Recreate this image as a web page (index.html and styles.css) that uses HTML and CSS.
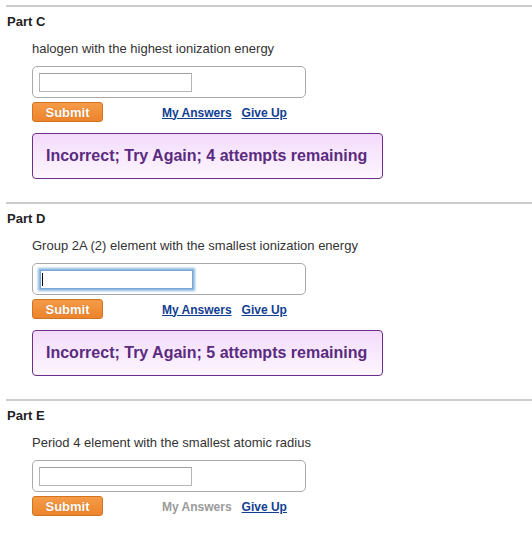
FILE: index.html
```html
<!DOCTYPE html>
<html>
<head>
<meta charset="utf-8">
<link rel="stylesheet" href="styles.css">
</head>
<body>
<div class="page">
  <section class="part">
    <h3 class="part-title">Part C</h3>
    <div class="part-body">
      <p class="question">halogen with the highest ionization energy</p>
      <div class="answer-box"><div class="answer-input"></div></div>
      <div class="actions">
        <span class="btn-submit">Submit</span>
        <span class="links"><a class="link" href="#">My Answers</a><a class="link" href="#">Give Up</a></span>
      </div>
      <div class="feedback">Incorrect; Try Again; 4 attempts remaining</div>
    </div>
  </section>
  <section class="part">
    <h3 class="part-title">Part D</h3>
    <div class="part-body">
      <p class="question">Group 2A (2) element with the smallest ionization energy</p>
      <div class="answer-box"><div class="answer-input focused"><span class="caret"></span></div></div>
      <div class="actions">
        <span class="btn-submit">Submit</span>
        <span class="links"><a class="link" href="#">My Answers</a><a class="link" href="#">Give Up</a></span>
      </div>
      <div class="feedback">Incorrect; Try Again; 5 attempts remaining</div>
    </div>
  </section>
  <section class="part">
    <h3 class="part-title">Part E</h3>
    <div class="part-body">
      <p class="question">Period 4 element with the smallest atomic radius</p>
      <div class="answer-box"><div class="answer-input"></div></div>
      <div class="actions">
        <span class="btn-submit">Submit</span>
        <span class="links"><span class="link disabled">My Answers</span><a class="link" href="#">Give Up</a></span>
      </div>
    </div>
  </section>
</div>
</body>
</html>
```
FILE: styles.css
```css
html, body {
  margin: 0;
  padding: 0;
  background: #fff;
}
body {
  font-family: "Liberation Sans", Arial, sans-serif;
  color: #222;
}
.page {
  padding: 5px 0 0 6px;
}
.part {
  border-top: 2px solid #cccccc;
  padding: 0 0 23px 1px;
}
.part-title {
  margin: 7px 0 0 0;
  font-size: 13px;
  line-height: 16px;
  font-weight: bold;
  color: #222;
}
.part-body {
  padding-left: 25px;
}
.question {
  margin: 11px 0 0 0;
  font-size: 13px;
  line-height: 16px;
  color: #333;
}
.answer-box {
  margin-top: 9px;
  width: 266px;
  height: 24px;
  border: 1px solid #aaaaaa;
  border-radius: 5px;
  background: #fff;
  padding: 6px 0 0 6px;
  box-sizing: content-box;
}
.answer-input {
  width: 151px;
  height: 17px;
  border: 1px solid #b5b5b5;
  border-top-color: #a0a0a0;
  background: #fff;
  position: relative;
}
.answer-input.focused {
  border-color: #7aa7d4;
  box-shadow: 0 0 2px 2px #8db8e0;
  margin-left: 1px;
}
.caret {
  position: absolute;
  left: 1px;
  top: 2px;
  width: 1px;
  height: 13px;
  background: #000;
}
.actions {
  display: flex;
  align-items: center;
  margin-top: 4px;
  height: 20px;
}
.btn-submit {
  display: flex;
  align-items: center;
  justify-content: center;
  width: 69px;
  height: 18px;
  border: 1px solid #d2731f;
  border-radius: 3px;
  background: linear-gradient(#f59b48, #ec842c);
  color: #fff;
  font-size: 13px;
  font-weight: bold;
  text-shadow: 0 0 1px rgba(150, 70, 0, 0.5);
}
.links {
  display: flex;
  gap: 10px;
  margin-left: 59px;
  padding-top: 1px;
}
.link {
  font-size: 12px;
  font-weight: bold;
  color: #123e92;
  text-decoration: underline;
}
.link.disabled {
  color: #9a9a9a;
  text-decoration: none;
}
.feedback {
  margin-top: 11px;
  width: 336px;
  height: 44px;
  border: 1px solid #6e2d8b;
  border-radius: 4px;
  background: linear-gradient(#f3dbfb, #fdf6ff);
  padding-left: 13px;
  display: flex;
  align-items: center;
  font-size: 16px;
  font-weight: bold;
  color: #5a2b7e;
}
```
